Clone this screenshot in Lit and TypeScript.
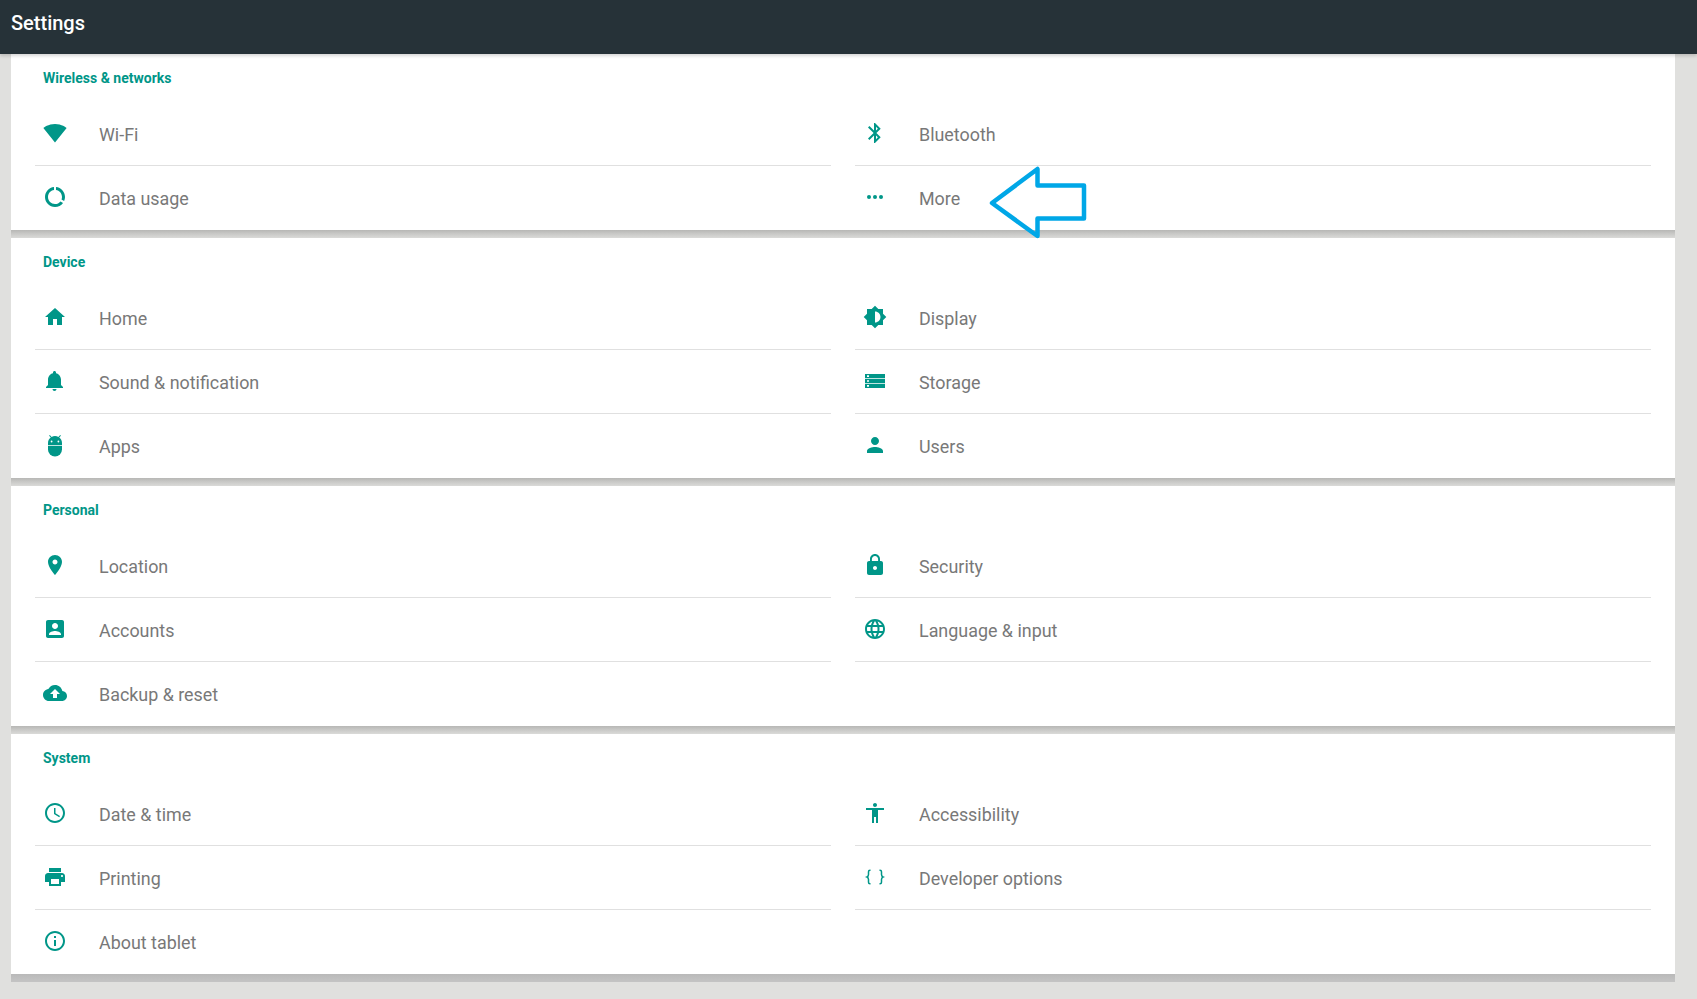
import { LitElement, css, html, svg } from "lit";
import { customElement } from "lit/decorators.js";

const solid = (d: string) => svg`<path d=${d}></path>`;

const icons: Record<string, unknown> = {
  wifi: solid("M12.01 21.49L23.64 7c-.45-.34-4.93-4-11.64-4C5.28 3 .81 6.66.36 7l11.63 14.49.01.01.01-.01z"),
  bluetooth: solid("M17.71 7.71L12 2h-1v7.59L6.41 5 5 6.41 10.59 12 5 17.59 6.41 19 11 14.41V22h1l5.71-5.71-4.3-4.29 4.3-4.29zM13 5.83l1.88 1.88L13 9.59V5.83zm1.88 10.46L13 18.17v-3.76l1.88 1.88z"),
  data: solid("M13 2.05v3.03c3.39.49 6 3.39 6 6.92 0 .9-.18 1.75-.48 2.54l2.6 1.53c.56-1.24.88-2.62.88-4.07 0-5.18-3.95-9.45-9-9.95zM12 19c-3.87 0-7-3.13-7-7 0-3.53 2.61-6.43 6-6.92V2.05c-5.06.5-9 4.76-9 9.95 0 5.52 4.47 10 9.99 10 3.31 0 6.24-1.61 8.06-4.09l-2.6-1.53C16.17 17.98 14.21 19 12 19z"),
  more: svg`<circle cx="6" cy="12" r="2"></circle><circle cx="12" cy="12" r="2"></circle><circle cx="18" cy="12" r="2"></circle>`,
  home: solid("M10 20v-6h4v6h5v-8h3L12 3 2 12h3v8z"),
  display: svg`<path fill-rule="evenodd" d="M20 15.31L23.31 12 20 8.69V4h-4.69L12 .69 8.69 4H4v4.69L.69 12 4 15.31V20h4.69L12 23.31 15.31 20H20v-4.69zM12 17.5V6.5c3.04 0 5.5 2.46 5.5 5.5s-2.46 5.5-5.5 5.5z"></path>`,
  bell: solid("M11.5 22c1.1 0 2-.9 2-2h-4c0 1.1.9 2 2 2zm6.5-6v-5.5c0-3.07-2.13-5.64-5-6.32V3.5c0-.83-.67-1.5-1.5-1.5S10 2.67 10 3.5v.68c-2.87.68-5 3.25-5 6.32V16l-2 2v1h17v-1l-2-2z"),
  storage: svg`<path fill-rule="evenodd" d="M2 5h20v4.2H2zM4 6.3v1.6h2V6.3zM2 9.9h20v4.2H2zM4 11.2v1.6h2v-1.6zM2 14.8h20V19H2zM4 16.1v1.6h2v-1.6z"></path>`,
  android: svg`<path fill-rule="evenodd" d="M5 12V10c0-2.4 1.1-4.400 2.800-5.500L6.100 2.800l.7-.7 1.800 1.800C9.600 3.400 10.800 3.100 12 3.100s2.400.3 3.400.8l1.800-1.800.7.7-1.700 1.700C17.900 5.600 19 7.600 19 10v2zM8.600 7.600a.9.9 0 1 0 0 1.800.9.9 0 0 0 0-1.800zM15.400 7.600a.9.9 0 1 0 0 1.800.9.9 0 0 0 0-1.800z"></path><path d="M5 12.800h14v3.700a7 7 0 0 1-14 0z"></path>`,
  person: solid("M12 12c2.21 0 4-1.79 4-4s-1.79-4-4-4-4 1.79-4 4 1.79 4 4 4zm0 2c-2.67 0-8 1.34-8 4v2h16v-2c0-2.66-5.33-4-8-4z"),
  pin: solid("M12 2C8.13 2 5 5.13 5 9c0 5.25 7 13 7 13s7-7.75 7-13c0-3.87-3.13-7-7-7zm0 9.5c-1.38 0-2.5-1.12-2.5-2.5s1.12-2.5 2.5-2.5 2.5 1.12 2.500 2.500-1.12 2.500-2.500 2.500z"),
  lock: solid("M18 8h-1V6c0-2.76-2.24-5-5-5S7 3.24 7 6v2H6c-1.1 0-2 .9-2 2v10c0 1.1.9 2 2 2h12c1.1 0 2-.9 2-2V10c0-1.1-.9-2-2-2zm-6 9c-1.1 0-2-.9-2-2s.9-2 2-2 2 .9 2 2-.9 2-2 2zm3.100-9H8.900V6c0-1.71 1.39-3.1 3.100-3.1 1.71 0 3.100 1.39 3.100 3.100v2z"),
  account: solid("M3 5v14c0 1.1.89 2 2 2h14c1.1 0 2-.9 2-2V5c0-1.1-.9-2-2-2H5c-1.11 0-2 .9-2 2zm12 4c0 1.66-1.34 3-3 3s-3-1.34-3-3 1.34-3 3-3 3 1.34 3 3zm-9 8c0-2 4-3.100 6-3.100s6 1.100 6 3.100v1H6v-1z"),
  globe: solid("M11.99 2C6.47 2 2 6.48 2 12s4.47 10 9.99 10C17.52 22 22 17.52 22 12S17.52 2 11.99 2zm6.93 6h-2.95c-.32-1.25-.78-2.45-1.38-3.56 1.84.63 3.37 1.91 4.33 3.56zM12 4.04c.83 1.2 1.48 2.53 1.91 3.96h-3.82c.43-1.43 1.08-2.76 1.91-3.96zM4.26 14C4.1 13.36 4 12.69 4 12s.1-1.36.26-2h3.38c-.08.66-.14 1.32-.14 2 0 .68.06 1.34.14 2H4.26zm.82 2h2.95c.32 1.25.78 2.45 1.38 3.56-1.84-.63-3.37-1.9-4.33-3.56zm2.95-8H5.08c.96-1.66 2.49-2.93 4.33-3.56C8.81 5.55 8.35 6.75 8.03 8zM12 19.96c-.83-1.2-1.48-2.53-1.91-3.96h3.82c-.43 1.43-1.08 2.76-1.91 3.96zM14.34 14H9.66c-.09-.66-.16-1.32-.16-2 0-.68.07-1.35.16-2h4.68c.09.65.16 1.32.16 2 0 .68-.07 1.34-.16 2zm.25 5.56c.6-1.11 1.06-2.31 1.38-3.56h2.95c-.96 1.65-2.49 2.93-4.33 3.56zM16.36 14c.08-.66.14-1.32.14-2 0-.68-.06-1.34-.14-2h3.38c.16.64.26 1.31.26 2s-.1 1.36-.26 2h-3.38z"),
  cloud: solid("M19.35 10.04C18.67 6.59 15.64 4 12 4 9.11 4 6.6 5.64 5.35 8.04 2.34 8.36 0 10.91 0 14c0 3.31 2.69 6 6 6h13c2.76 0 5-2.24 5-5 0-2.64-2.05-4.78-4.65-4.96zM14 13v4h-4v-4H7l5-5 5 5h-3z"),
  clock: solid("M11.99 2C6.47 2 2 6.48 2 12s4.47 10 9.99 10C17.52 22 22 17.52 22 12S17.52 2 11.99 2zM12 20c-4.42 0-8-3.58-8-8s3.58-8 8-8 8 3.58 8 8-3.58 8-8 8zm.5-13H11v6l5.25 3.15.75-1.23-4.5-2.67z"),
  access: solid("M12 2c1.1 0 2 .9 2 2s-.9 2-2 2-2-.9-2-2 .9-2 2-2zm9 7h-6v13h-2v-6h-2v6H9V9H3V7h18v2z"),
  print: solid("M19 8H5c-1.66 0-3 1.34-3 3v6h4v4h12v-4h4v-6c0-1.66-1.34-3-3-3zm-3 11H8v-5h8v5zm3-7c-.55 0-1-.45-1-1s.45-1 1-1 1 .45 1 1-.45 1-1 1zm-1-9H6v4h12V3z"),
  braces: svg`<path fill="none" stroke="currentColor" stroke-width="1.5" d="M7.500 5.300H7c-1 0-1.500.5-1.500 1.500v2.800c0 1.200-.5 2-1.500 2.400 1 .4 1.500 1.200 1.500 2.400v2.800c0 1 .5 1.500 1.500 1.500h.5M16.500 5.300h.5c1 0 1.500.5 1.500 1.500v2.800c0 1.200.5 2 1.500 2.400-1 .4-1.500 1.200-1.500 2.400v2.800c0 1-.5 1.500-1.500 1.500h-.5"></path>`,
  info: solid("M11 7h2v2h-2zm0 4h2v6h-2zm1-9C6.48 2 2 6.48 2 12s4.48 10 10 10 10-4.48 10-10S17.52 2 12 2zm0 18c-4.41 0-8-3.59-8-8s3.59-8 8-8 8 3.59 8 8-3.59 8-8 8z"),
};

type Item = { label: string; icon: string };
type Section = { title: string; items: Item[] };

const sections: Section[] = [
  {
    title: "Wireless & networks",
    items: [
      { label: "Wi-Fi", icon: "wifi" },
      { label: "Bluetooth", icon: "bluetooth" },
      { label: "Data usage", icon: "data" },
      { label: "More", icon: "more" },
    ],
  },
  {
    title: "Device",
    items: [
      { label: "Home", icon: "home" },
      { label: "Display", icon: "display" },
      { label: "Sound & notification", icon: "bell" },
      { label: "Storage", icon: "storage" },
      { label: "Apps", icon: "android" },
      { label: "Users", icon: "person" },
    ],
  },
  {
    title: "Personal",
    items: [
      { label: "Location", icon: "pin" },
      { label: "Security", icon: "lock" },
      { label: "Accounts", icon: "account" },
      { label: "Language & input", icon: "globe" },
      { label: "Backup & reset", icon: "cloud" },
    ],
  },
  {
    title: "System",
    items: [
      { label: "Date & time", icon: "clock" },
      { label: "Accessibility", icon: "access" },
      { label: "Printing", icon: "print" },
      { label: "Developer options", icon: "braces" },
      { label: "About tablet", icon: "info" },
    ],
  },
];

@customElement("app-root")
export class AppRoot extends LitElement {
  static styles = css`
    :host {
      display: block;
      position: relative;
      min-height: 999px;
      background: #e0e0de;
      font-family: Roboto, "Liberation Sans", sans-serif;
    }
    .appbar {
      position: relative;
      z-index: 1;
      height: 54px;
      box-sizing: border-box;
      padding: 11px 0 0 11px;
      background: #263238;
      box-shadow: 0 2px 3px rgba(0, 0, 0, 0.16);
      color: #fff;
      font-size: 20px;
      font-weight: 500;
      line-height: 24px;
    }
    .content {
      padding: 0 22px 0 11px;
    }
    .section {
      background: #fff;
      padding: 0 24px;
    }
    .heading {
      height: 48px;
      padding-left: 8px;
      color: #009688;
      font-size: 14px;
      font-weight: 700;
      line-height: 48px;
    }
    .grid {
      display: grid;
      grid-template-columns: 1fr 1fr;
      column-gap: 24px;
    }
    .row {
      display: flex;
      align-items: center;
      gap: 32px;
      height: 64px;
      box-sizing: border-box;
      padding-left: 8px;
      color: #787878;
      font-size: 17.9px;
    }
    .row.line {
      border-bottom: 1px solid #e0e0e0;
    }
    .row span {
      margin-top: 1px;
    }
    .row svg {
      flex: none;
      width: 24px;
      height: 24px;
      margin-bottom: 2px;
      fill: #009688;
      color: #009688;
    }
    .strip {
      height: 8px;
      background: linear-gradient(#b7b7b5, #c8c8c6 45%, #dadad8);
    }
    .strip.last {
      background: linear-gradient(#b9b9b9, #c4c4c4);
    }
    .arrow {
      position: absolute;
      left: 980px;
      top: 160px;
      width: 112px;
      height: 84px;
      fill: none;
      stroke: #00a7e7;
      stroke-width: 4.5;
      stroke-linejoin: round;
    }
  `;

  private renderSection(section: Section, last: boolean) {
    const rows = Math.ceil(section.items.length / 2);
    return html`
      <div class="section">
        <div class="heading">${section.title}</div>
        <div class="grid">
          ${section.items.map(
            (item, i) => html`
              <div class="row ${Math.floor(i / 2) < rows - 1 ? "line" : ""}">
                <svg viewBox="0 0 24 24">${icons[item.icon]}</svg>
                <span>${item.label}</span>
              </div>
            `
          )}
        </div>
      </div>
      <div class="strip ${last ? "last" : ""}"></div>
    `;
  }

  render() {
    return html`
      <div class="appbar">Settings</div>
      <div class="content">
        ${sections.map((s, i) => this.renderSection(s, i === sections.length - 1))}
      </div>
      <svg class="arrow" viewBox="0 0 112 84">
        <path d="M12 43L57.500 9V25.500H104V58.500H57.500V76z"></path>
      </svg>
    `;
  }
}
